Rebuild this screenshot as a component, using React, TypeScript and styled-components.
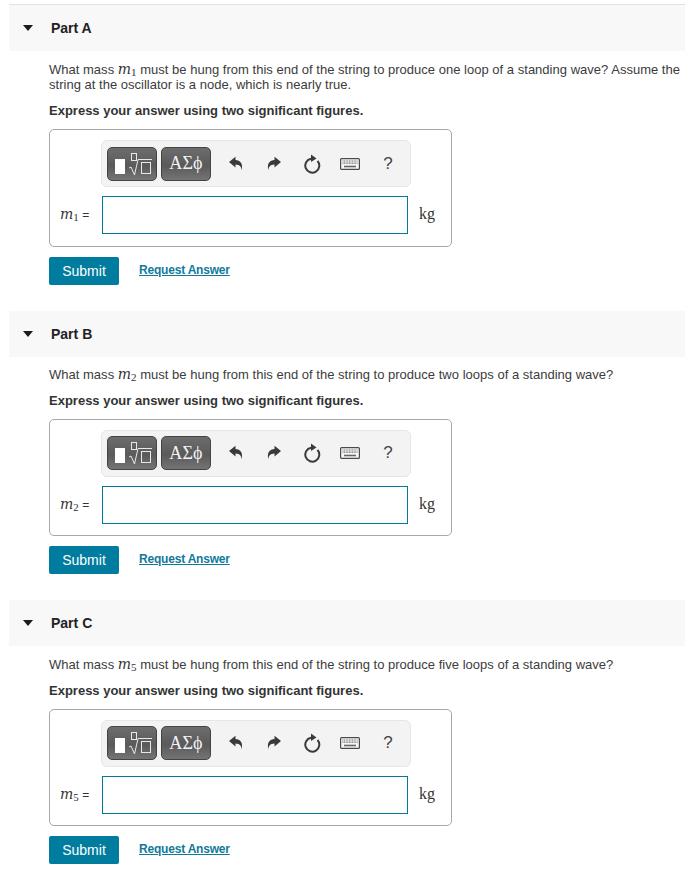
import React from "react";
import styled, { createGlobalStyle } from "styled-components";

const GlobalStyle = createGlobalStyle`
  html, body {
    margin: 0;
    padding: 0;
    background: #fff;
  }
  body {
    font-family: "Liberation Sans", Arial, sans-serif;
    color: #333;
  }
`;

const Page = styled.div`
  width: 676px;
  margin-left: 9px;
  padding-top: 4px;
`;

const TopRule = styled.div`
  height: 1px;
  background: #e2e2e2;
`;

const PartSection = styled.section<{ $gap: number }>`
  margin-bottom: ${(p) => p.$gap}px;
`;

const PartHeader = styled.div`
  height: 46px;
  background: #f8f8f8;
  display: flex;
  align-items: center;
  padding-left: 14px;
  gap: 18px;
`;

const Caret = styled.span`
  width: 0;
  height: 0;
  border-left: 5px solid transparent;
  border-right: 5px solid transparent;
  border-top: 6px solid #1c1c1c;
`;

const PartTitle = styled.h2`
  margin: 0;
  font-size: 14px;
  line-height: 16px;
  font-weight: 700;
  color: #222;
`;

const Body = styled.div<{ $top: number }>`
  padding: ${(p) => p.$top}px 0 0 40px;
`;

const Question = styled.p`
  margin: 0;
  width: 636px;
  font-size: 13px;
  line-height: 15px;
  letter-spacing: 0.015px;
  color: #3c3c3c;
`;

const MathVar = styled.span`
  font-family: "DejaVu Serif", "Liberation Serif", serif;
  font-style: italic;
  font-size: 14px;
  line-height: 0;
  color: #333;

  sub {
    font-family: "Liberation Serif", serif;
    font-style: normal;
    font-size: 11px;
    line-height: 0;
    vertical-align: -2px;
  }
`;

const Instruction = styled.p`
  margin: 11px 0 0;
  font-size: 13px;
  line-height: 15px;
  font-weight: 700;
  color: #333;
`;

const AnswerBox = styled.div`
  margin-top: 11px;
  width: 403px;
  height: 117.6px;
  box-sizing: border-box;
  border: 1px solid #a8a8a8;
  border-radius: 5px;
  padding: 10px 0 0 51px;
`;

const Toolbar = styled.div`
  width: 310px;
  height: 47px;
  box-sizing: border-box;
  border: 1px solid #e6e6e6;
  border-radius: 6px;
  background: #f3f3f3;
  display: flex;
  align-items: center;
  padding-left: 5px;
  gap: 4px;
`;

const TemplateButton = styled.div`
  width: 50px;
  height: 34px;
  box-sizing: border-box;
  border: 1px solid #444;
  border-radius: 5px;
  background: linear-gradient(#6d6d6d, #5a5a5a 55%, #747474);
  display: flex;
  align-items: center;
  justify-content: center;
  color: #f2f2f2;
`;

const SymbolLabel = styled.span`
  font-family: "Liberation Serif", "DejaVu Serif", serif;
  font-size: 18px;
  letter-spacing: 0.2px;
`;

const Tools = styled.div`
  display: flex;
  align-items: center;
  margin-left: 2px;
`;

const ToolSlot = styled.div`
  width: 38px;
  height: 24px;
  display: flex;
  align-items: center;
  justify-content: center;
`;

const HelpMark = styled.span`
  font-size: 17px;
  line-height: 20px;
  color: #444;
`;

const AnswerRow = styled.div`
  margin: 9px 0 0 -41px;
  display: flex;
  align-items: center;
`;

const VarLabel = styled.div`
  width: 42px;
  font-size: 12px;
  color: #333;
  white-space: nowrap;
  box-sizing: border-box;
`;

const AnswerInput = styled.input`
  width: 306px;
  height: 38px;
  box-sizing: border-box;
  border: 1px solid #007a9c;
  background: #fff;
  outline: none;
  padding: 0;
`;

const Unit = styled.span`
  margin: 0 0 2px 11px;
  font-family: "Liberation Serif", "DejaVu Serif", serif;
  font-size: 16px;
  color: #333;
`;

const Actions = styled.div`
  margin-top: 10px;
  display: flex;
  align-items: flex-start;
  gap: 20px;
`;

const SubmitButton = styled.button`
  width: 70px;
  height: 28px;
  border: 0;
  border-radius: 2px;
  padding: 0;
  background: #007c9e;
  color: #fff;
  font-family: "Liberation Sans", Arial, sans-serif;
  font-size: 14px;
`;

const RequestLink = styled.a`
  margin-top: 5px;
  font-size: 12px;
  line-height: 16px;
  font-weight: 700;
  letter-spacing: -0.2px;
  color: #0f7a9b;
  text-decoration: underline;
`;

const TemplateIcon = () => (
  <svg width="40" height="26" viewBox="0 0 40 26">
    <rect x="3" y="8" width="10" height="15" fill="#fff" />
    <rect x="19.5" y="2.5" width="5" height="7" fill="none" stroke="#e8e8e8" />
    <path d="M17 17l2 -1 3.5 8 3.5 -15.5h14" fill="none" stroke="#e8e8e8" />
    <rect x="29.5" y="11.5" width="9" height="11" fill="none" stroke="#e8e8e8" />
  </svg>
);

const UndoIcon = () => (
  <svg width="16" height="16" viewBox="0 0 16 16">
    <path d="M1 6L7.5 .8V4C12 4 15.5 7.5 13.5 14.5 13.5 11 12 9 7.5 8.6V11.5Z" fill="#3a3a3a" />
  </svg>
);

const RedoIcon = () => (
  <svg width="16" height="16" viewBox="0 0 16 16">
    <path d="M15 6L8.5 .8V4C4 4 .5 7.5 2.5 14.5 2.5 11 4 9 8.5 8.6V11.5Z" fill="#3a3a3a" />
  </svg>
);

const ResetIcon = () => (
  <svg width="18" height="20" viewBox="0 0 18 20">
    <path d="M8 4.8A7 7 0 1 0 14.5 7" fill="none" stroke="#3a3a3a" strokeWidth="2" />
    <path d="M8 .5l5.5 4L8 8z" fill="#3a3a3a" />
  </svg>
);

const KeyboardIcon = () => (
  <svg width="20" height="12" viewBox="0 0 20 12">
    <rect x="0.6" y="0.6" width="18.8" height="10.8" rx="1" fill="#f7f7f7" stroke="#4a4a4a" strokeWidth="1.2" />
    <path d="M2.5 3h15M2.5 5.2h15" stroke="#666" strokeWidth="1.2" strokeDasharray="1 .6" />
    <path d="M4 8.5h12" stroke="#666" strokeWidth="1.6" />
  </svg>
);

const parts = [
  {
    id: "A",
    sub: "1",
    after:
      " must be hung from this end of the string to produce one loop of a standing wave? Assume the string at the oscillator is a node, which is nearly true.",
    top: 11,
    gap: 26,
  },
  {
    id: "B",
    sub: "2",
    after: " must be hung from this end of the string to produce two loops of a standing wave?",
    top: 10,
    gap: 26,
  },
  {
    id: "C",
    sub: "5",
    after: " must be hung from this end of the string to produce five loops of a standing wave?",
    top: 10.4,
    gap: 0,
  },
];

export default function App() {
  return (
    <Page>
      <GlobalStyle />
      <TopRule />
      {parts.map((part) => (
        <PartSection key={part.id} $gap={part.gap}>
          <PartHeader>
            <Caret />
            <PartTitle>Part {part.id}</PartTitle>
          </PartHeader>
          <Body $top={part.top}>
            <Question>
              What mass{" "}
              <MathVar>
                m<sub>{part.sub}</sub>
              </MathVar>
              {part.after}
            </Question>
            <Instruction>Express your answer using two significant figures.</Instruction>
            <AnswerBox>
              <Toolbar>
                <TemplateButton>
                  <TemplateIcon />
                </TemplateButton>
                <TemplateButton>
                  <SymbolLabel>ΑΣϕ</SymbolLabel>
                </TemplateButton>
                <Tools>
                  <ToolSlot><UndoIcon /></ToolSlot>
                  <ToolSlot><RedoIcon /></ToolSlot>
                  <ToolSlot><ResetIcon /></ToolSlot>
                  <ToolSlot><KeyboardIcon /></ToolSlot>
                  <ToolSlot><HelpMark>?</HelpMark></ToolSlot>
                </Tools>
              </Toolbar>
              <AnswerRow>
                <VarLabel>
                  <MathVar>
                    m<sub>{part.sub}</sub>
                  </MathVar>{" "}
                  =
                </VarLabel>
                <AnswerInput aria-label={`m${part.sub}`} />
                <Unit>kg</Unit>
              </AnswerRow>
            </AnswerBox>
            <Actions>
              <SubmitButton>Submit</SubmitButton>
              <RequestLink href="#">Request Answer</RequestLink>
            </Actions>
          </Body>
        </PartSection>
      ))}
    </Page>
  );
}
